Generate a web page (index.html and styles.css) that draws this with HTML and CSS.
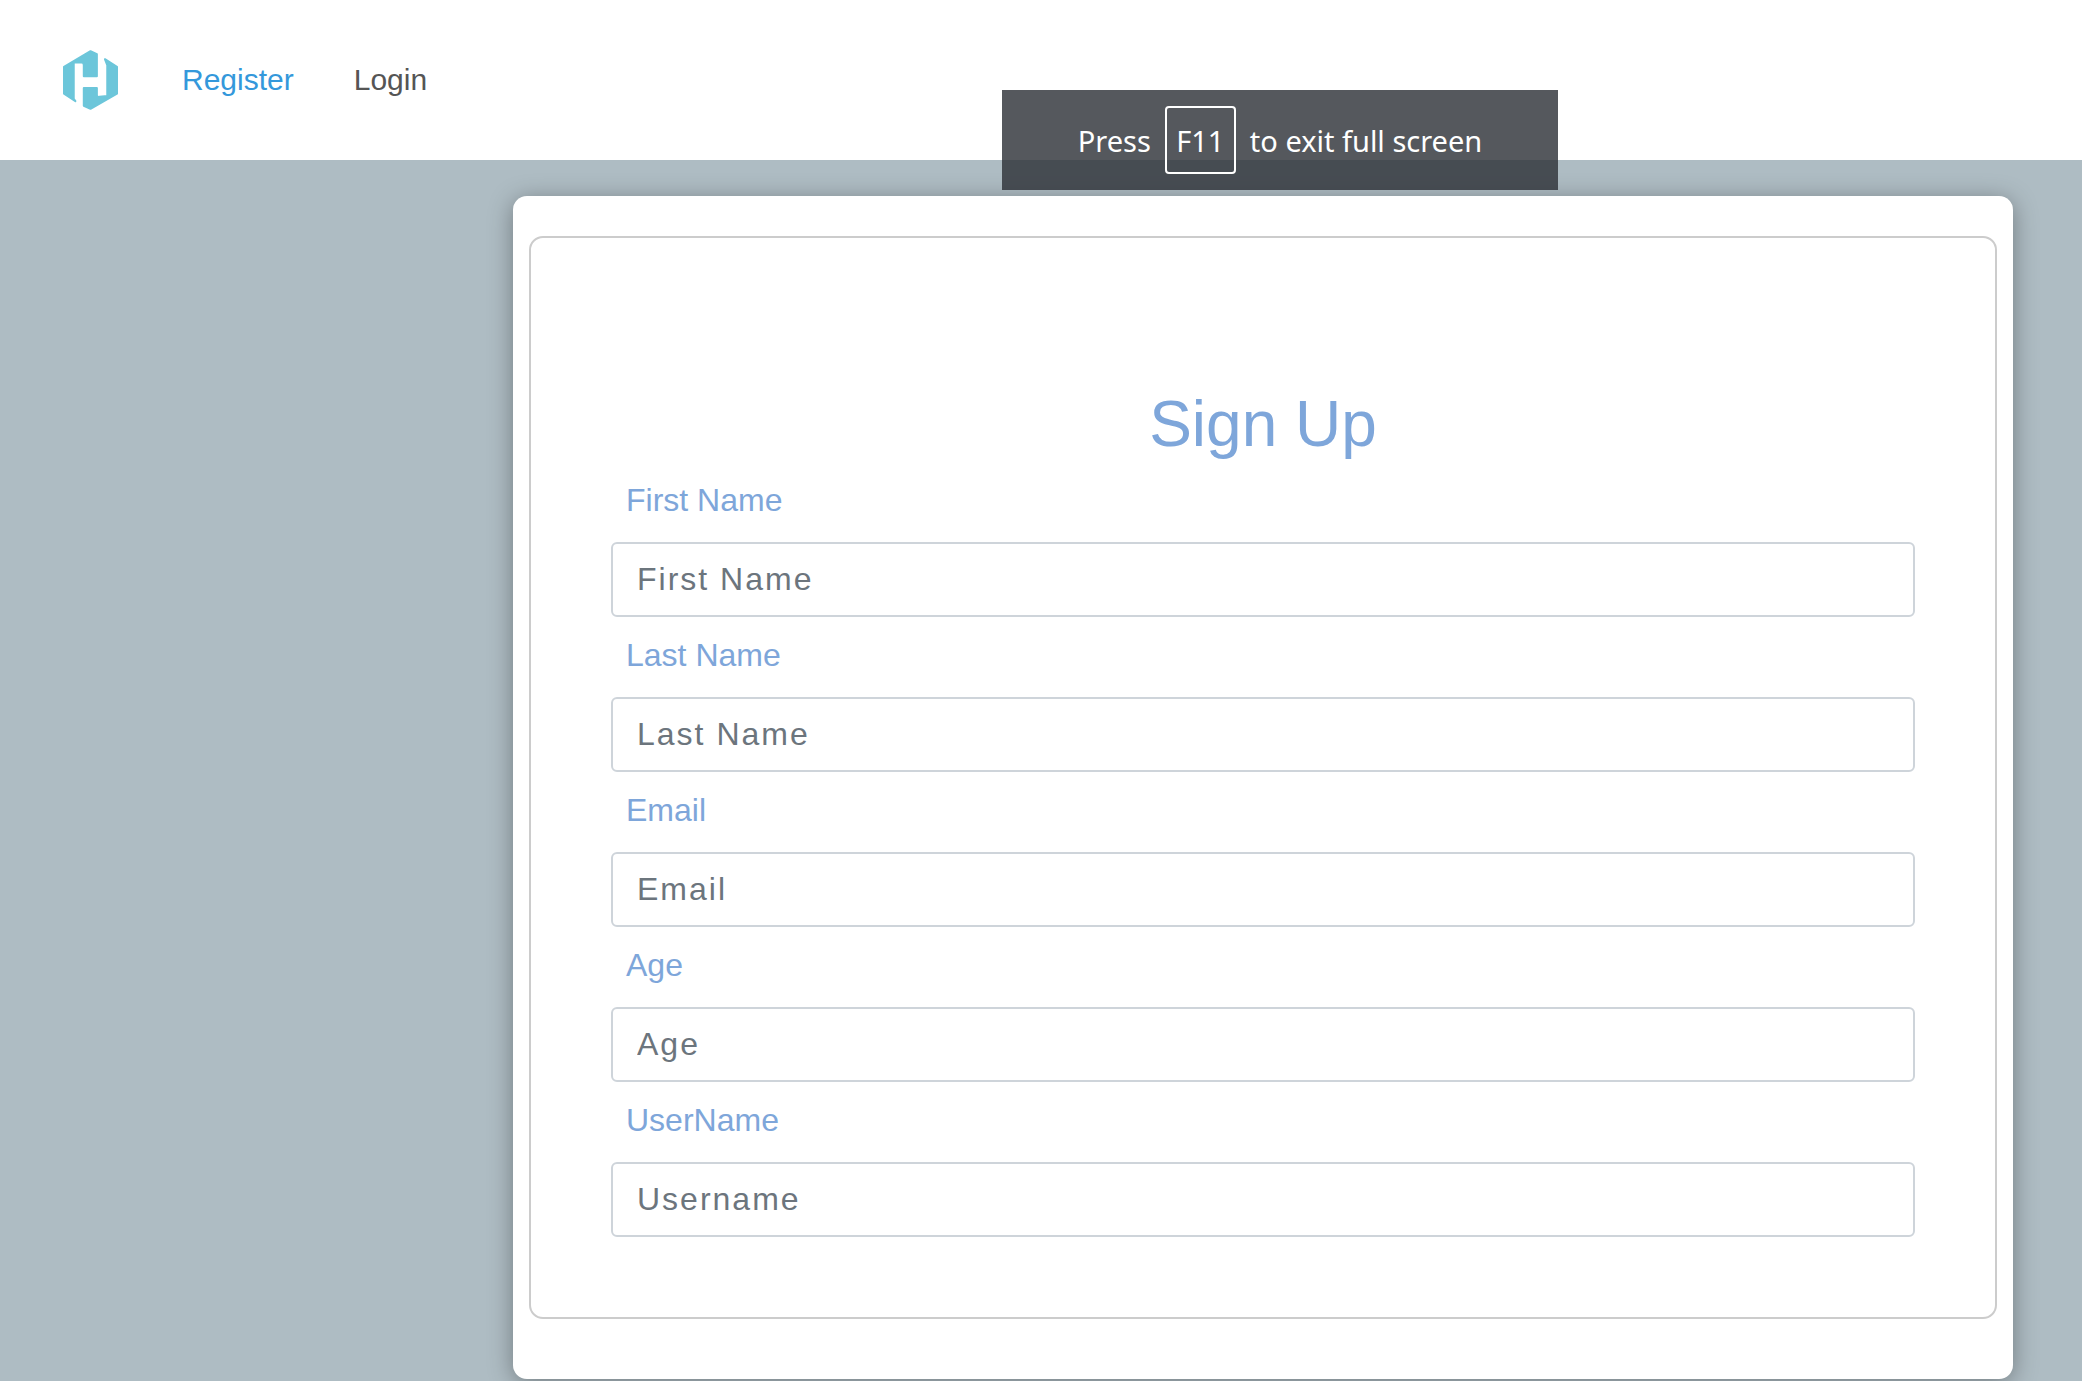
FILE: index.html
```html
<!DOCTYPE html>
<html lang="en">
<head>
    <meta charset="UTF-8">
    <title>Sign Up</title>
    <link rel="stylesheet" href="styles.css">
</head>
<body>
    <nav class="navbar">
        <a class="logo" href="#">
            <svg viewBox="68 60 164 178" width="55" height="60">
                <path fill="#6cc6da" stroke="#6cc6da" stroke-width="6" stroke-linejoin="round" d="M150 63 L169 72 L169 138 L130 138 L130 104 Q130 97 123 97 L100 97 L100 205 L105 212 L71 190 L71 110 Z"/>
                <path fill="#6cc6da" stroke="#6cc6da" stroke-width="6" stroke-linejoin="round" d="M130 173 L169 173 L169 200 L200 197 L200 105 L193 87 L229 110 L229 190 L150 235 L130 226 Z"/>
            </svg>
        </a>
        <a class="nav-link active" href="#">Register</a>
        <a class="nav-link" href="#">Login</a>
    </nav>

    <main class="page">
        <div class="card">
            <form class="signup">
                <h1>Sign Up</h1>
                <label class="field">
                    <span>First Name</span>
                    <input type="text" placeholder="First Name">
                </label>
                <label class="field">
                    <span>Last Name</span>
                    <input type="text" placeholder="Last Name">
                </label>
                <label class="field">
                    <span>Email</span>
                    <input type="email" placeholder="Email">
                </label>
                <label class="field">
                    <span>Age</span>
                    <input type="text" placeholder="Age">
                </label>
                <label class="field">
                    <span>UserName</span>
                    <input type="text" placeholder="Username">
                </label>
            </form>
        </div>
    </main>

    <div class="fullscreen-hint">
        <span>Press</span>
        <kbd>F11</kbd>
        <span>to exit full screen</span>
    </div>
</body>
</html>
```

FILE: styles.css
```css
html, body {
    height: 100%;
    margin: 0;
    overflow: hidden;
}

body {
    font-family: "Liberation Sans", Arial, sans-serif;
    background: #aebcc3;
    display: flex;
    flex-direction: column;
}

.navbar {
    height: 160px;
    flex: none;
    background: #fff;
    display: flex;
    align-items: center;
    padding-left: 63px;
}

.logo {
    display: flex;
    margin-right: 64px;
    margin-top: -1px;
}

.nav-link {
    font-size: 30px;
    color: #555;
    text-decoration: none;
    margin-right: 60px;
}

.nav-link.active {
    color: #3498db;
}

.page {
    padding: 36px 69px 0 513px;
}

.card {
    background: #fff;
    border-radius: 14px;
    padding: 40px 16px 60px;
    box-shadow: 0 4px 24px rgba(0, 0, 0, 0.35);
}

.signup {
    border: 2px solid #ccc;
    border-radius: 14px;
    padding: 154px 80px 60px;
}

.signup h1 {
    margin: 0 0 26px;
    font-size: 64px;
    font-weight: 400;
    line-height: 1;
    text-align: center;
    color: #7ea6da;
}

.field {
    display: block;
    margin-bottom: 20px;
}

.field span {
    display: block;
    font-size: 32px;
    line-height: 37px;
    color: #7ea6da;
    padding-left: 15px;
    margin-bottom: 23px;
}

.field input {
    display: block;
    box-sizing: border-box;
    width: 100%;
    height: 75px;
    padding: 0 24px;
    font-family: inherit;
    font-size: 32px;
    letter-spacing: 2px;
    background: #fff;
    border: 2px solid #ced4da;
    border-radius: 6px;
}

.field input::placeholder {
    color: #6c757d;
    opacity: 1;
}

.fullscreen-hint {
    position: absolute;
    left: 1002px;
    top: 90px;
    width: 556px;
    height: 100px;
    display: flex;
    align-items: center;
    justify-content: center;
    gap: 14px;
    background: rgba(46, 50, 56, 0.815);
    color: #fff;
    font-family: "Noto Sans", sans-serif;
    font-size: 29px;
}

.fullscreen-hint kbd {
    font: inherit;
    box-sizing: border-box;
    width: 71px;
    height: 68px;
    display: flex;
    align-items: center;
    justify-content: center;
    border: 2px solid #fff;
    border-radius: 4px;
}
```
